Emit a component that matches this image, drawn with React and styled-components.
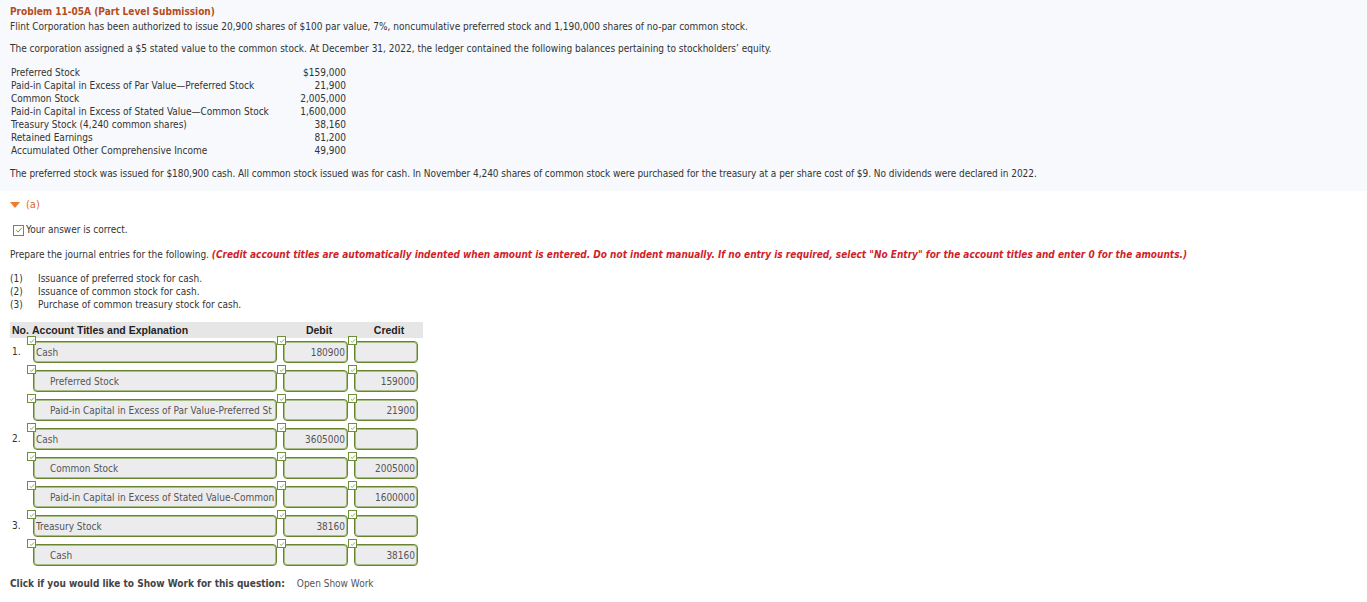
import React from 'react';
import styled, { createGlobalStyle } from 'styled-components';

const GlobalStyle = createGlobalStyle`
  html, body {
    margin: 0;
    padding: 0;
    background: #ffffff;
  }
  body {
    font-family: 'DejaVu Sans Condensed', 'DejaVu Sans', Verdana, sans-serif;
    font-size: 10px;
    color: #333;
  }
`;

const Page = styled.div`
  width: 1367px;
  height: 602px;
  overflow: hidden;
`;

const Intro = styled.div`
  background: #f7f9fc;
  padding: 5px 10px 10px 10px;
`;

const Title = styled.div`
  font-weight: bold;
  color: #b54d1c;
  line-height: 14px;
`;

const Para = styled.p`
  margin: ${p => p.$top || 0}px 0 0 0;
  line-height: 14px;
  letter-spacing: ${p => p.$tight ? '-0.05px' : 'normal'};
`;

const Balances = styled.div`
  display: grid;
  grid-template-columns: 260px 75px;
  margin: 10px 0 0 1px;
  line-height: 13px;
`;

const Amount = styled.span`
  text-align: right;
`;

const Section = styled.div`
  padding: 6px 10px 0 10px;
`;

const PartHead = styled.div`
  display: flex;
  align-items: center;
  gap: 6px;
  color: #e0692a;
  font-size: 11px;
  line-height: 14px;
  margin-top: 1px;
`;

const Triangle = styled.span`
  width: 0;
  height: 0;
  border-left: 5px solid transparent;
  border-right: 5px solid transparent;
  border-top: 6px solid #f07b2b;
`;

const Correct = styled.div`
  display: flex;
  align-items: center;
  gap: 2px;
  margin: 11px 0 0 3px;
  line-height: 14px;
`;

const CheckBox = styled.span`
  width: ${p => p.$size || 10}px;
  height: ${p => p.$size || 10}px;
  box-sizing: border-box;
  border: 1px solid #6e8e3a;
  background: #ffffff;
  display: inline-flex;
  align-items: center;
  justify-content: center;
`;

const Red = styled.span`
  color: #d01f2a;
  font-weight: bold;
  font-style: italic;
`;

const List = styled.div`
  margin-top: 10px;
  line-height: 13px;
`;

const ListRow = styled.div`
  display: flex;
`;

const ListNo = styled.span`
  width: 28px;
`;

const Journal = styled.div`
  margin-top: 11px;
  width: 413px;
`;

const HeadRow = styled.div`
  display: grid;
  grid-template-columns: 22px 251px 72px 68px;
  background: #e6e6e6;
  height: 16px;
  align-items: center;
  font-family: 'Liberation Sans', Arial, sans-serif;
  font-weight: bold;
  font-size: 10.5px;
  color: #222;
`;

const HeadCell = styled.span`
  text-align: ${p => p.$align || 'left'};
  padding-left: ${p => p.$pad || 0}px;
`;

const EntryRow = styled.div`
  display: grid;
  grid-template-columns: 17px 244px 65px 64px;
  column-gap: 6px;
  margin-top: ${p => (p.$first ? 3 : 7)}px;
  height: 22px;
  align-items: center;
`;

const RowNo = styled.span`
  padding-left: 2px;
  margin-top: -2px;
  color: #333;
`;

const FieldWrap = styled.div`
  position: relative;
  height: 22px;
`;

const Field = styled.div`
  box-sizing: border-box;
  height: 22px;
  border: 1px solid #67852f;
  box-shadow: inset 0 0 0 1px #a9bd86;
  border-radius: 4px;
  background: #ececef;
  color: #555;
  display: flex;
  align-items: center;
  justify-content: ${p => (p.$num ? 'flex-end' : 'flex-start')};
  padding: 0 ${p => (p.$num ? 2 : 0)}px 0 ${p => (p.$indent ? 16 : 2)}px;
  white-space: nowrap;
  overflow: hidden;
`;

const Badge = styled.span`
  position: absolute;
  left: -6px;
  top: -5px;
  display: flex;
`;

const Footer = styled.div`
  margin-top: 11px;
  display: flex;
  gap: 12px;
  line-height: 14px;
`;

const FooterLabel = styled.span`
  font-weight: bold;
  color: #444;
`;

const FooterLink = styled.span`
  color: #555;
`;

const Tick = ({ size = 9 }) => (
  <CheckBox $size={size}>
    <svg width={size - 3} height={size - 3} viewBox="0 0 8 8">
      <path d="M1.2 4.2 L3.2 6 L6.8 1.8" fill="none" stroke="#6e9a3a" strokeWidth="1" />
    </svg>
  </CheckBox>
);

const balances = [
  ['Preferred Stock', '$159,000'],
  ['Paid-in Capital in Excess of Par Value\u2014Preferred Stock', '21,900'],
  ['Common Stock', '2,005,000'],
  ['Paid-in Capital in Excess of Stated Value\u2014Common Stock', '1,600,000'],
  ['Treasury Stock (4,240 common shares)', '38,160'],
  ['Retained Earnings', '81,200'],
  ['Accumulated Other Comprehensive Income', '49,900'],
];

const entries = [
  { no: '1.', title: 'Cash', debit: '180900', credit: '' },
  { title: 'Preferred Stock', indent: true, debit: '', credit: '159000' },
  { title: 'Paid-in Capital in Excess of Par Value-Preferred St', indent: true, debit: '', credit: '21900' },
  { no: '2.', title: 'Cash', debit: '3605000', credit: '' },
  { title: 'Common Stock', indent: true, debit: '', credit: '2005000' },
  { title: 'Paid-in Capital in Excess of Stated Value-Common', indent: true, debit: '', credit: '1600000' },
  { no: '3.', title: 'Treasury Stock', debit: '38160', credit: '' },
  { title: 'Cash', indent: true, debit: '', credit: '38160' },
];

const Input = ({ children, num, indent }) => (
  <FieldWrap>
    <Field $num={num} $indent={indent}>{children}</Field>
    <Badge><Tick /></Badge>
  </FieldWrap>
);

export default function App() {
  return (
    <Page>
      <GlobalStyle />
      <Intro>
        <Title>Problem 11-05A (Part Level Submission)</Title>
        <Para $top={1}>
          Flint Corporation has been authorized to issue 20,900 shares of $100 par value, 7%, noncumulative preferred stock and 1,190,000 shares of no-par common stock.
        </Para>
        <Para $top={8}>
          The corporation assigned a $5 stated value to the common stock. At December 31, 2022, the ledger contained the following balances pertaining to stockholders’ equity.
        </Para>
        <Balances>
          {balances.map(([label, amt]) => (
            <React.Fragment key={label}>
              <span>{label}</span>
              <Amount>{amt}</Amount>
            </React.Fragment>
          ))}
        </Balances>
        <Para $top={10} $tight>
          The preferred stock was issued for $180,900 cash. All common stock issued was for cash. In November 4,240 shares of common stock were purchased for the treasury at a per share cost of $9. No dividends were declared in 2022.
        </Para>
      </Intro>
      <Section>
        <PartHead>
          <Triangle />
          <span>(a)</span>
        </PartHead>
        <Correct>
          <Tick size={11} />
          <span>Your answer is correct.</span>
        </Correct>
        <Para $top={11}>
          Prepare the journal entries for the following. <Red>(Credit account titles are automatically indented when amount is entered. Do not indent manually. If no entry is required, select "No Entry" for the account titles and enter 0 for the amounts.)</Red>
        </Para>
        <List>
          <ListRow><ListNo>(1)</ListNo><span>Issuance of preferred stock for cash.</span></ListRow>
          <ListRow><ListNo>(2)</ListNo><span>Issuance of common stock for cash.</span></ListRow>
          <ListRow><ListNo>(3)</ListNo><span>Purchase of common treasury stock for cash.</span></ListRow>
        </List>
        <Journal>
          <HeadRow>
            <HeadCell $pad={2}>No.</HeadCell>
            <HeadCell>Account Titles and Explanation</HeadCell>
            <HeadCell $align="center">Debit</HeadCell>
            <HeadCell $align="center">Credit</HeadCell>
          </HeadRow>
          {entries.map((e, i) => (
            <EntryRow key={i} $first={i === 0}>
              <RowNo>{e.no}</RowNo>
              <Input indent={e.indent}>{e.title}</Input>
              <Input num>{e.debit}</Input>
              <Input num>{e.credit}</Input>
            </EntryRow>
          ))}
        </Journal>
        <Footer>
          <FooterLabel>Click if you would like to Show Work for this question:</FooterLabel>
          <FooterLink>Open Show Work</FooterLink>
        </Footer>
      </Section>
    </Page>
  );
}
